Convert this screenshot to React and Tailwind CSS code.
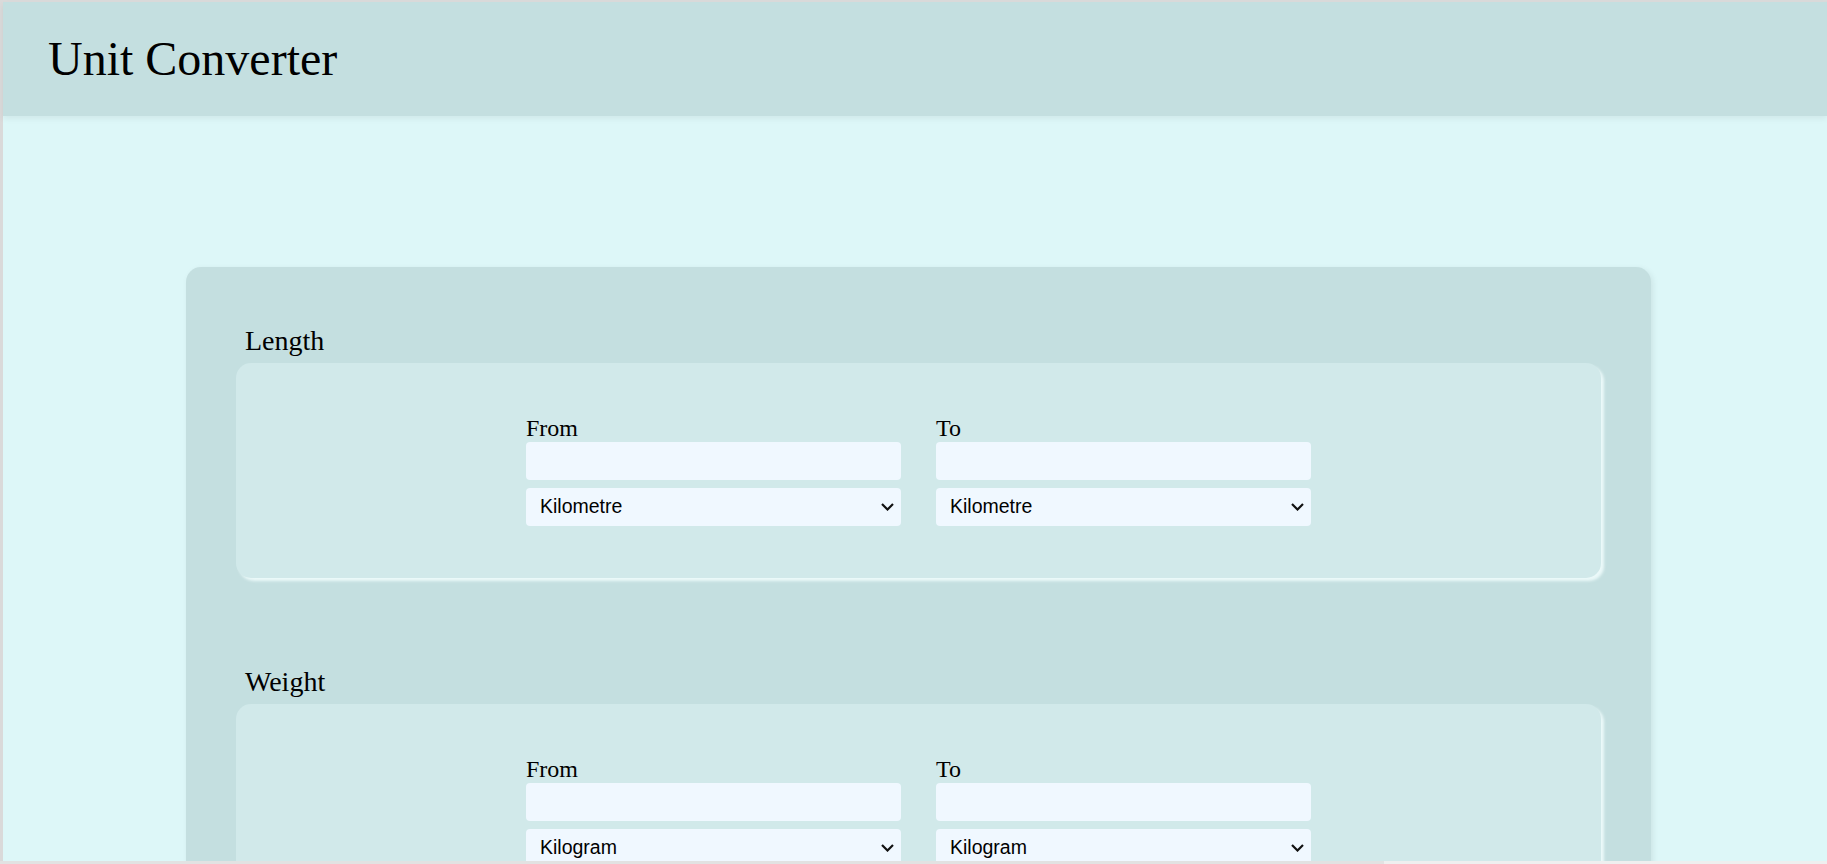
import { useState } from "react";

const lengthUnits = ["Kilometre", "Metre", "Centimetre", "Millimetre", "Mile", "Yard", "Foot", "Inch"];
const weightUnits = ["Kilogram", "Gram", "Milligram", "Tonne", "Pound", "Ounce"];

function UnitSelect({ units, value, onChange }) {
    return (
        <div className="relative">
            <select
                value={value}
                onChange={(e) => onChange(e.target.value)}
                className="block w-full h-[38px] appearance-none rounded-[4px] bg-[#f0f8ff] pl-[14px] pr-8 text-[19.5px] text-black outline-none font-['Liberation_Sans',Arial,sans-serif]"
            >
                {units.map((u) => (
                    <option key={u} value={u}>{u}</option>
                ))}
            </select>
            <svg
                className="pointer-events-none absolute right-[7px] top-1/2 -translate-y-1/2"
                width="13"
                height="8"
                viewBox="0 0 13 8"
                fill="none"
            >
                <path d="M1 1L6.5 6.5L12 1" stroke="#111" strokeWidth="2.2" />
            </svg>
        </div>
    );
}

function Column({ label, units }) {
    const [value, setValue] = useState("");
    const [unit, setUnit] = useState(units[0]);

    return (
        <div className="flex w-[375px] flex-col">
            <label className="text-[24px] leading-[28px] text-black">{label}</label>
            <input
                type="text"
                value={value}
                onChange={(e) => setValue(e.target.value)}
                className="h-[38px] w-full rounded-[4px] bg-[#f0f8ff] px-3 text-[19.5px] outline-none font-['Liberation_Sans',Arial,sans-serif]"
            />
            <div className="mt-2">
                <UnitSelect units={units} value={unit} onChange={setUnit} />
            </div>
        </div>
    );
}

function Section({ title, units }) {
    return (
        <section className="mb-[88px]">
            <h2 className="pl-[9px] text-[28px] leading-[32px] font-normal text-black">{title}</h2>
            <div className="mt-[6px] flex justify-center gap-[35px] rounded-[15px] bg-[#d1e9ea] pt-[51px] pb-[52px] shadow-[3px_3px_3px_rgba(240,252,252,0.9)]">
                <Column label="From" units={units} />
                <Column label="To" units={units} />
            </div>
        </section>
    );
}

export default function App() {
    return (
        <div className="min-h-screen border-l-[3px] border-t-2 border-[#dadada] bg-[#ddf7f8] font-['Liberation_Serif','Times_New_Roman',serif]">
            <header className="flex h-[114px] items-center bg-[#c4dfe0] pl-[45px] shadow-[0_3px_6px_rgba(0,0,0,0.06)]">
                <h1 className="text-[48px] font-normal leading-normal text-black">Unit Converter</h1>
            </header>

            <main className="pt-[151px] pb-20">
                <div className="ml-[183px] w-[1465px] rounded-[15px] bg-[#c4dfe0] px-[50px] pt-[58px] pb-2 shadow-[2px_2px_6px_rgba(0,0,0,0.08)]">
                    <Section title="Length" units={lengthUnits} />
                    <Section title="Weight" units={weightUnits} />
                </div>
            </main>

            {/* frame strip at the bottom of the window */}
            <div className="fixed bottom-0 left-0 right-0 flex h-[3px]">
                <div className="w-[1384px] bg-[#e2e2e2]" />
                <div className="flex-1 bg-[#efefef]" />
            </div>
        </div>
    );
}
